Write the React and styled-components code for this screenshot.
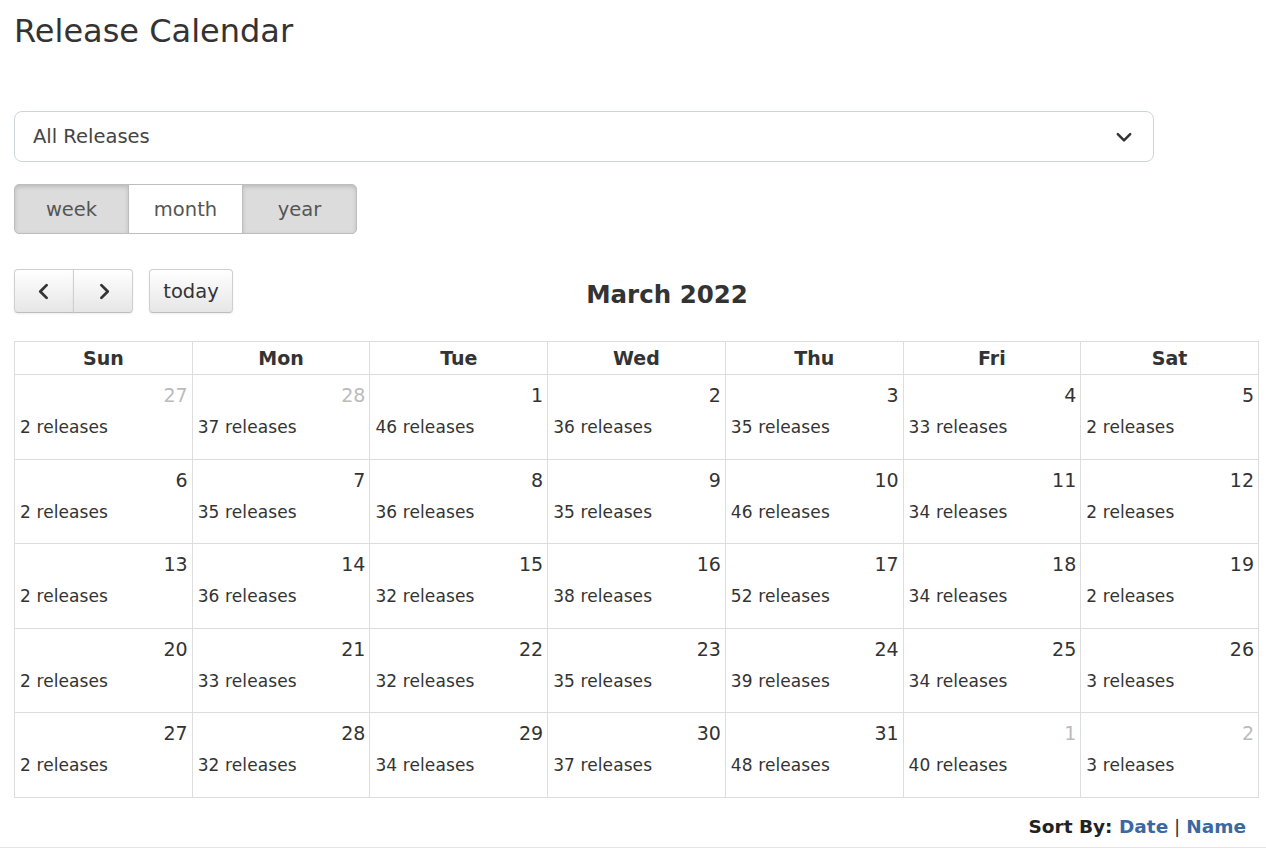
import styled, { createGlobalStyle } from 'styled-components';

const GlobalStyle = createGlobalStyle`
  html, body {
    margin: 0;
    padding: 0;
    background: #fff;
  }
  body {
    font-family: "DejaVu Sans", "Liberation Sans", sans-serif;
    color: #333;
  }
`;

const weeks = [
  [[27, 2, true], [28, 37, true], [1, 46], [2, 36], [3, 35], [4, 33], [5, 2]],
  [[6, 2], [7, 35], [8, 36], [9, 35], [10, 46], [11, 34], [12, 2]],
  [[13, 2], [14, 36], [15, 32], [16, 38], [17, 52], [18, 34], [19, 2]],
  [[20, 2], [21, 33], [22, 32], [23, 35], [24, 39], [25, 34], [26, 3]],
  [[27, 2], [28, 32], [29, 34], [30, 37], [31, 48], [1, 40, true], [2, 3, true]],
];

const dayNames = ['Sun', 'Mon', 'Tue', 'Wed', 'Thu', 'Fri', 'Sat'];

const Chevron = ({ dir = 'down', size = 16, weight = 2.4 }) => {
  const paths = {
    down: 'M2.5 5.5 L8 11 L13.5 5.5',
    left: 'M10 2 L4 8 L10 14',
    right: 'M6 2 L12 8 L6 14',
  };
  return (
    <svg width={size} height={size} viewBox="0 0 16 16" fill="none">
      <path d={paths[dir]} stroke="#333" strokeWidth={weight} strokeLinecap="round" strokeLinejoin="round" />
    </svg>
  );
};

const App = () => {
  return (
    <Page>
      <GlobalStyle />
      <Title>Release Calendar</Title>

      <Select>
        <span>All Releases</span>
        <Chevron dir="down" size={18} weight={2.2} />
      </Select>

      <ViewGroup>
        <ViewButton $active>week</ViewButton>
        <ViewButton>month</ViewButton>
        <ViewButton $active>year</ViewButton>
      </ViewGroup>

      <Toolbar>
        <NavLeft>
          <NavGroup>
            <NavButton $w={60}><Chevron dir="left" size={17} weight={2.6} /></NavButton>
            <NavButton $w={60}><Chevron dir="right" size={17} weight={2.6} /></NavButton>
          </NavGroup>
          <NavButton $w={84} $single>today</NavButton>
        </NavLeft>
        <MonthTitle>March 2022</MonthTitle>
        <RightSpacer />
      </Toolbar>

      <Calendar>
        {dayNames.map((d) => (
          <HeadCell key={d}>{d}</HeadCell>
        ))}
        {weeks.flat().map(([num, count, other], i) => (
          <DayCell key={i}>
            <DayNumber $other={other}>{num}</DayNumber>
            <Releases>{count} releases</Releases>
          </DayCell>
        ))}
      </Calendar>

      <SortBar>
        <strong>Sort By: </strong>
        <SortLink>Date</SortLink>
        <Pipe> | </Pipe>
        <SortLink>Name</SortLink>
      </SortBar>
      <Rule />
    </Page>
  );
};

export default App;

const Page = styled.div`
  width: 1266px;
  box-sizing: border-box;
  padding: 12px 8px 0 14px;
`;

const Title = styled.h1`
  margin: 0;
  font-size: 32px;
  line-height: 38px;
  font-weight: normal;
  color: #333;
`;

const Select = styled.div`
  margin-top: 61px;
  width: 1140px;
  height: 51px;
  box-sizing: border-box;
  border: 1px solid #ced4da;
  border-radius: 8px;
  display: flex;
  align-items: center;
  justify-content: space-between;
  padding: 0 20px 0 18px;
  font-size: 19.5px;
  color: #444;
`;

const ViewGroup = styled.div`
  margin-top: 22px;
  display: inline-flex;
  height: 50px;
`;

const ViewButton = styled.div`
  width: 115px;
  box-sizing: border-box;
  display: flex;
  align-items: center;
  justify-content: center;
  font-size: 19.5px;
  color: #555;
  border: 1px solid #bdbdbd;
  background: ${(p) => (p.$active ? '#dcdcdc' : '#fff')};
  box-shadow: ${(p) => (p.$active ? 'inset 0 2px 4px rgba(0,0,0,0.15)' : 'none')};
  & + & {
    margin-left: -1px;
  }
  &:first-child {
    border-radius: 5px 0 0 5px;
  }
  &:last-child {
    border-radius: 0 5px 5px 0;
  }
`;

const Toolbar = styled.div`
  margin-top: 35px;
  display: flex;
  align-items: flex-start;
  width: 1244px;
`;

const NavLeft = styled.div`
  display: flex;
  gap: 16px;
`;

const NavGroup = styled.div`
  display: flex;
  & > div {
    border-radius: 0;
  }
  & > div:first-child {
    border-radius: 4px 0 0 4px;
  }
  & > div:last-child {
    border-radius: 0 4px 4px 0;
    margin-left: -1px;
  }
`;

const NavButton = styled.div`
  width: ${(p) => p.$w}px;
  height: 44px;
  box-sizing: border-box;
  display: flex;
  align-items: center;
  justify-content: center;
  border: 1px solid #cfcfcf;
  border-bottom-color: #bdbdbd;
  border-radius: 4px;
  background: linear-gradient(#ffffff, #e6e6e6);
  box-shadow: inset 0 1px 0 rgba(255, 255, 255, 0.2), 0 1px 2px rgba(0, 0, 0, 0.08);
  font-size: 19.5px;
  color: #333;
`;

const MonthTitle = styled.h2`
  flex: 1;
  margin: 11px 0 0;
  text-align: center;
  font-size: 24.5px;
  line-height: 30px;
  font-weight: bold;
  color: #333;
`;

const RightSpacer = styled.div`
  width: 157px;
`;

const Calendar = styled.div`
  margin-top: 28px;
  width: 1245px;
  box-sizing: border-box;
  display: grid;
  grid-template-columns: repeat(7, 1fr);
  grid-template-rows: 33px repeat(5, 84.6px);
  border-left: 1px solid #ddd;
  border-top: 1px solid #ddd;
`;

const HeadCell = styled.div`
  border-right: 1px solid #ddd;
  border-bottom: 1px solid #ddd;
  text-align: center;
  font-weight: bold;
  font-size: 19px;
  line-height: 32px;
  color: #333;
`;

const DayCell = styled.div`
  border-right: 1px solid #ddd;
  border-bottom: 1px solid #ddd;
  padding: 8px 4px 0 5px;
  box-sizing: border-box;
  display: flex;
  flex-direction: column;
`;

const DayNumber = styled.div`
  text-align: right;
  font-size: 19px;
  line-height: 24px;
  color: ${(p) => (p.$other ? '#bbb' : '#333')};
`;

const Releases = styled.div`
  margin-top: 10px;
  font-size: 17px;
  line-height: 21px;
  letter-spacing: 0.1px;
  color: #333;
`;

const SortBar = styled.div`
  margin-top: 17px;
  padding-right: 12px;
  text-align: right;
  font-size: 18.5px;
  line-height: 24px;
  color: #222;
`;

const SortLink = styled.a`
  color: #3b68a3;
  font-weight: bold;
  cursor: pointer;
`;

const Pipe = styled.span`
  color: #333;
`;

const Rule = styled.div`
  margin: 8px -8px 0 -14px;
  border-top: 1px solid #e5e5e5;
`;
